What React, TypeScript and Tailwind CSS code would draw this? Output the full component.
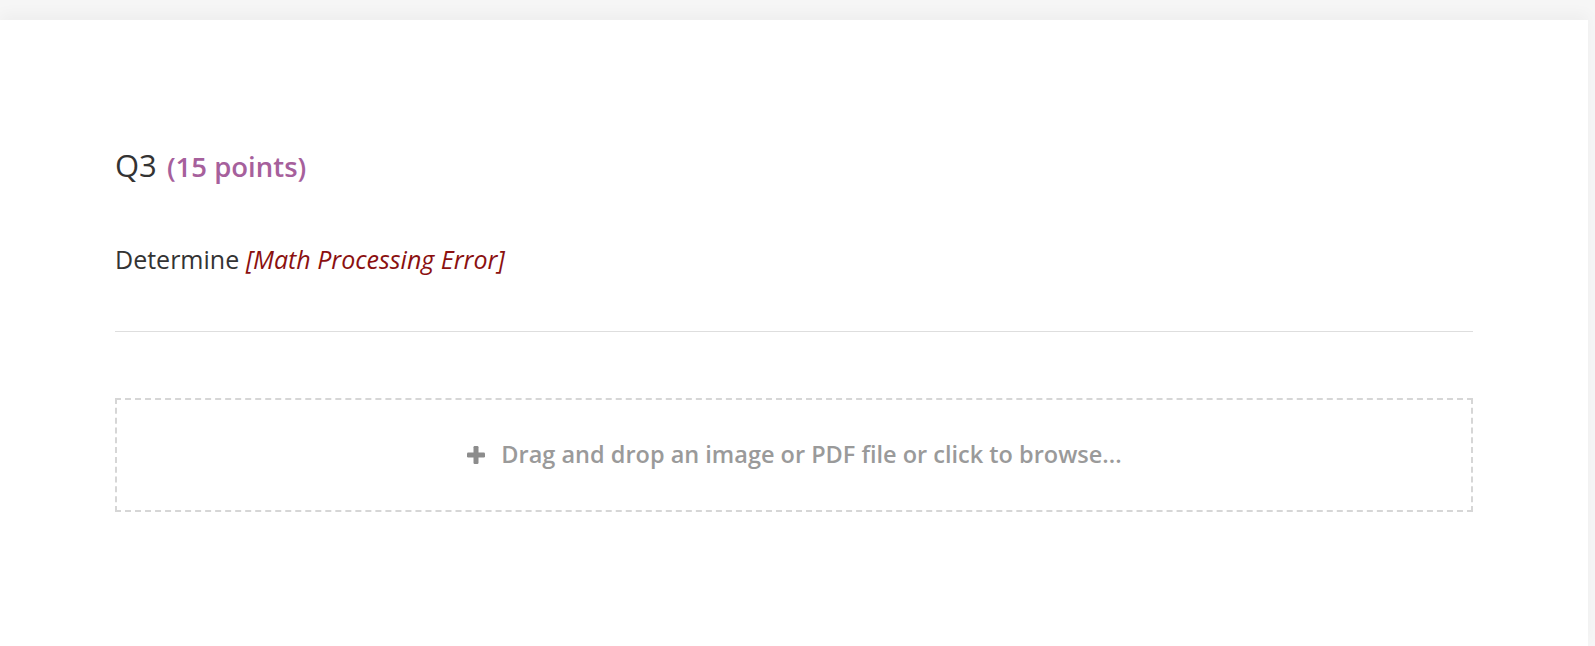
const font = { fontFamily: '"Open Sans", "Noto Sans", sans-serif' };

const PlusIcon = () => (
  <svg width="20" height="20" viewBox="0 0 20 20" className="shrink-0">
    <rect x="7.5" y="1" width="5" height="18" rx="1.2" fill="#8c8c8c" />
    <rect x="1" y="7.5" width="18" height="5" rx="1.2" fill="#8c8c8c" />
  </svg>
);

export default function App() {
  return (
    <div className="min-h-screen bg-[#f6f6f6] pt-5 pr-[7px]" style={font}>
      <div className="min-h-[626px] bg-white px-[115px] pt-[124px] shadow-[0_-6px_14px_rgba(0,0,0,0.035)]">
        {/* Question header */}
        <h2 className="text-[31px] leading-[42px] font-[500] text-[#333]">
          Q3{" "}
          <span className="ml-[2px] text-[27.5px] font-semibold text-[#a6609c]">
            (15 points)
          </span>
        </h2>

        <p className="mt-[55px] text-[25px] leading-[32px] text-[#333]">
          Determine{" "}
          <span className="italic text-[#8b1010]">[Math Processing Error]</span>
        </p>

        <hr className="mt-[56px] border-t border-[#dedede]" />

        {/* Upload area */}
        <div className="mt-[66px] flex h-[114px] cursor-pointer items-center justify-center gap-[15px] border-2 border-dashed border-[#d6d6d6]">
          <PlusIcon />
          <span className="text-[23.5px] font-semibold text-[#9a9a9a]">
            Drag and drop an image or PDF file or click to browse...
          </span>
        </div>
      </div>
    </div>
  );
}
